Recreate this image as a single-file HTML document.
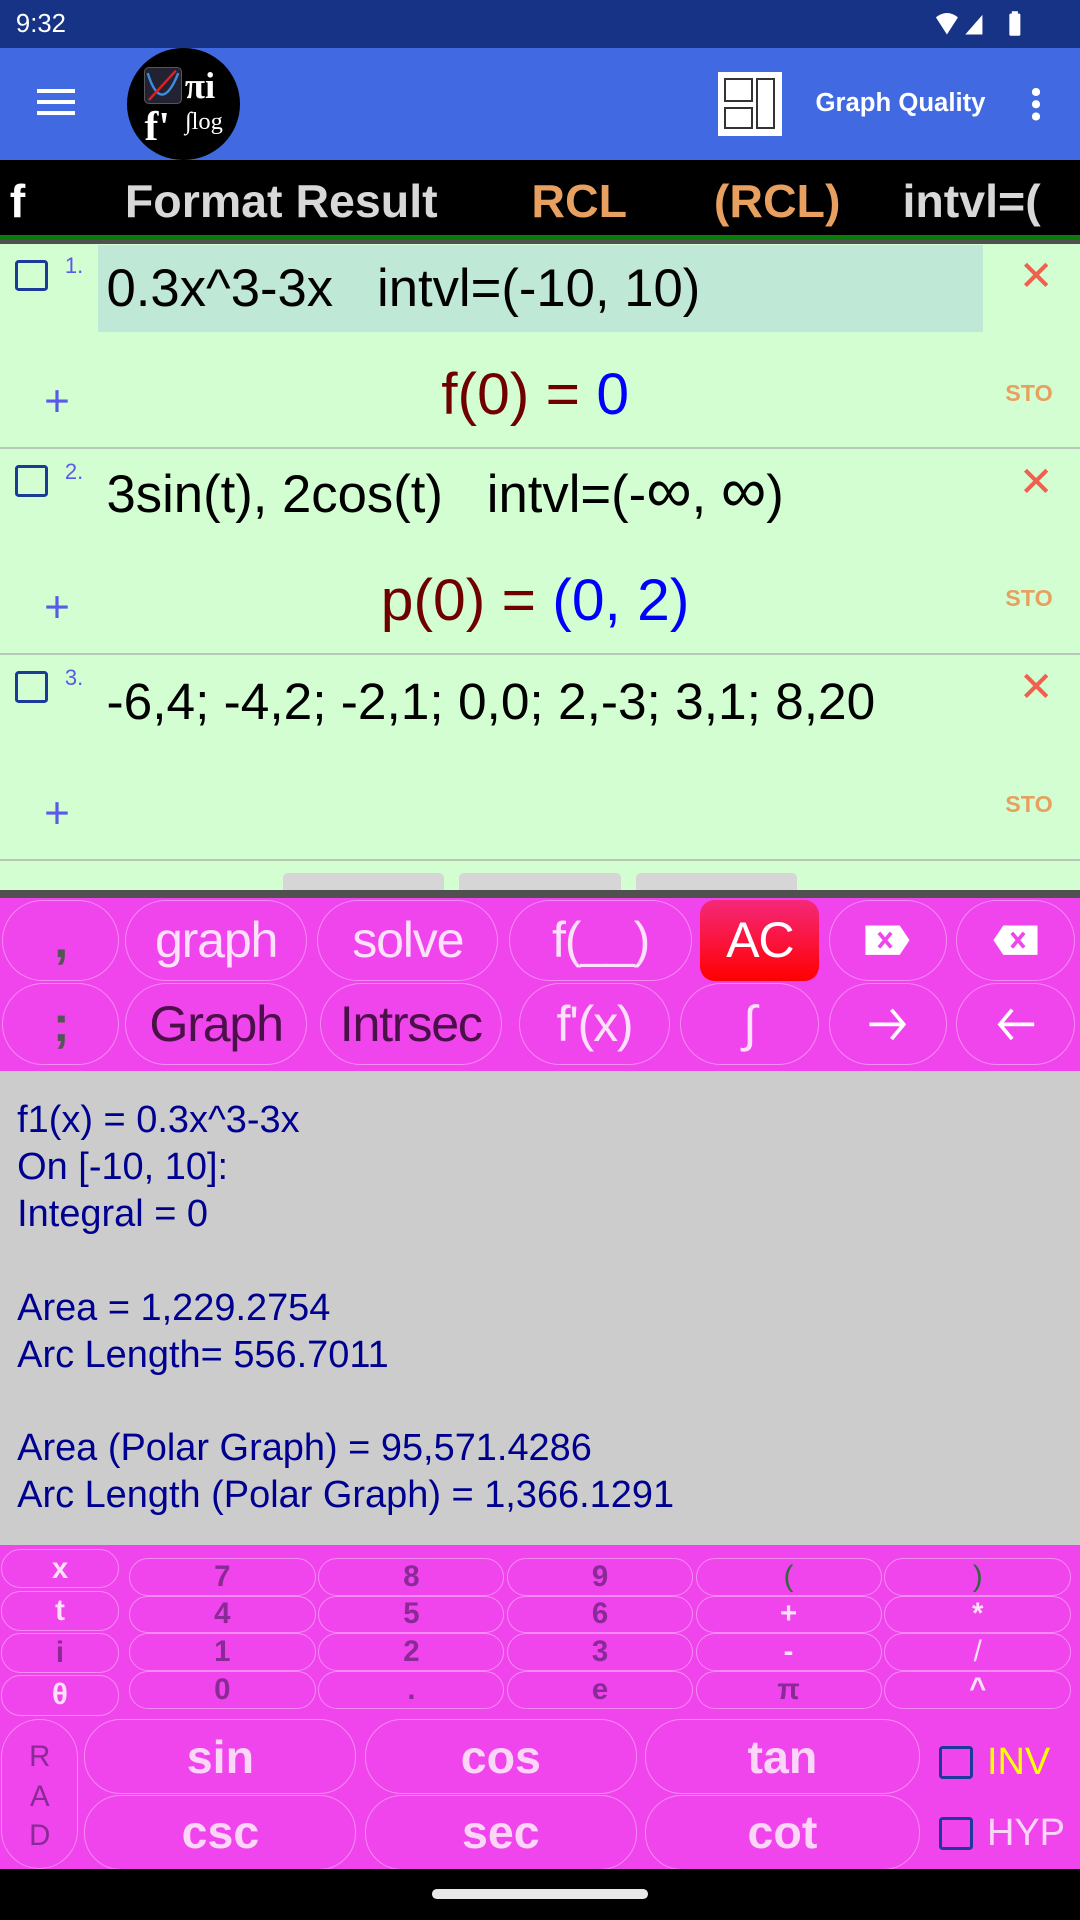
<!DOCTYPE html>
<html><head><meta charset="utf-8"><style>
*{margin:0;padding:0;box-sizing:border-box}
html,body{width:1080px;height:1920px;overflow:hidden;background:#000}
#r{position:absolute;left:0;top:0;width:882px;height:1568px;zoom:1.2244898;font-family:"Liberation Sans",sans-serif;background:#d2fed2;overflow:hidden}
.a{position:absolute}
.k{position:absolute;border:1.5px solid #f68af3;border-radius:34px;display:flex;align-items:center;justify-content:center;color:#fde0fb;font-size:41px;letter-spacing:-1px}
.n{position:absolute;border:1.5px solid #f68af3;border-radius:16px;display:flex;align-items:center;justify-content:center;color:#8a2a96;font-size:24px;font-weight:bold}
.s{position:absolute;border:1.5px solid #f68af3;border-radius:30px;display:flex;align-items:center;justify-content:center;color:#fbd6f8;font-size:38px;font-weight:bold}
.cb{position:absolute;width:27px;height:26px;border:3px solid #1c3a9a;border-radius:3px}
.row{position:absolute;left:0;width:882px;background:#d2fed2;border-bottom:2px solid #b8c8b8}
.x{position:absolute;left:832px;color:#f0604e;font-size:34px}
.sto{position:absolute;left:821px;color:#e8a060;font-size:19px;font-weight:bold}
.plus{position:absolute;left:36px;color:#5a5ae8;font-size:36px}
.num{position:absolute;left:53px;color:#5a5ae8;font-size:18px}
</style></head><body><div id="r">
<div class="a" style="left:0;top:0;width:882px;height:39px;background:#173385"></div>
<div class="a" style="left:13px;top:8px;color:#fff;font-size:21px">9:32</div>
<svg class="a" style="left:760px;top:8px" width="80" height="24" viewBox="0 0 80 24"><path d="M4 6 Q13 -1 22 6 L13 20 Z" fill="#fff"/><path d="M28 20 L42 4 L42 20Z" fill="#fff"/><rect x="64" y="3" width="9" height="18" rx="1" fill="#fff"/><rect x="66" y="1" width="5" height="3" fill="#fff"/></svg>
<div class="a" style="left:0;top:39px;width:882px;height:92px;background:#4169e1"></div>
<div class="a" style="left:30px;top:73px;width:31px;height:3px;background:#fff;box-shadow:0 9px 0 #fff,0 18px 0 #fff"></div>
<div class="a" style="left:104px;top:39px;width:92px;height:92px;border-radius:50%;background:#000"></div>
<div class="a" style="left:118px;top:55px;width:31px;height:30px;border:1px solid #555;border-radius:4px;background:#223"></div>
<svg class="a" style="left:118px;top:55px" width="31" height="30"><path d="M3 5 Q14 40 28 5" stroke="#3a8ee0" fill="none" stroke-width="2"/><path d="M4 27 L26 3" stroke="#e02020" stroke-width="2"/></svg>
<div class="a" style="left:151px;top:52px;color:#fff;font-family:'Liberation Serif',serif;font-size:30px;font-weight:bold">πi</div>
<div class="a" style="left:118px;top:84px;color:#fff;font-family:'Liberation Serif',serif;font-size:34px;font-weight:bold">f'</div>
<div class="a" style="left:151px;top:88px;color:#fff;font-family:'Liberation Serif',serif;font-size:20px">∫log</div>
<div class="a" style="left:586px;top:59px;width:53px;height:52px;background:#fff"></div>
<div class="a" style="left:591px;top:64px;width:24px;height:19px;border:2px solid #333"></div>
<div class="a" style="left:591px;top:87px;width:24px;height:18px;border:2px solid #333"></div>
<div class="a" style="left:617px;top:64px;width:16px;height:41px;border:2px solid #333"></div>
<div class="a" style="left:666px;top:73px;color:#fff;font-size:21px;font-weight:bold">Graph Quality</div>
<div class="a" style="left:843px;top:72px;width:6px;height:6px;border-radius:3px;background:#fff;box-shadow:0 10px 0 #fff,0 20px 0 #fff"></div>
<div class="a" style="left:0;top:131px;width:882px;height:61px;background:#000"></div>
<div class="a" style="left:0;top:192px;width:882px;height:4px;background:#0a7a0a"></div>
<div class="a" style="left:0;top:196px;width:882px;height:3px;background:#505050"></div>
<div class="a" style="left:8px;top:142px;font-size:38px;font-weight:bold;color:#fff">f</div>
<div class="a" style="left:102px;top:142px;font-size:38px;font-weight:bold;color:#d8d8d8">Format Result</div>
<div class="a" style="left:434px;top:142px;font-size:38px;font-weight:bold;color:#e8a060">RCL</div>
<div class="a" style="left:583px;top:142px;font-size:38px;font-weight:bold;color:#e8a060">(RCL)</div>
<div class="a" style="left:737px;top:142px;font-size:38px;font-weight:bold;color:#d8d8d8">intvl=(</div>

<div class="row" style="top:199px;height:168px"></div>
<div class="a" style="left:80px;top:200px;width:723px;height:71px;background:#c0e8d6"></div>
<div class="cb" style="left:12px;top:212px"></div><div class="num" style="top:207px">1.</div>
<div class="a" style="left:87px;top:211px;font-size:43px;color:#000;white-space:pre">0.3x^3-3x   intvl=(-10, 10)</div>
<div class="x" style="top:205px">✕</div>
<div class="a" style="left:0;width:874px;text-align:center;top:295px;font-size:48px;color:#700000">f(0) = <span style="color:#0000ff">0</span></div>
<div class="plus" style="top:308px">+</div><div class="sto" style="top:310px">STO</div>

<div class="row" style="top:367px;height:168px"></div>
<div class="cb" style="left:12px;top:380px"></div><div class="num" style="top:375px">2.</div>
<div class="a" style="left:87px;top:379px;font-size:43px;color:#000;white-space:pre">3sin(t), 2cos(t)   intvl=(-<span style="font-size:52px;line-height:40px">∞</span>, <span style="font-size:52px;line-height:40px">∞</span>)</div>
<div class="x" style="top:373px">✕</div>
<div class="a" style="left:0;width:874px;text-align:center;top:463px;font-size:48px;color:#700000">p(0) = <span style="color:#0000ff">(0, 2)</span></div>
<div class="plus" style="top:476px">+</div><div class="sto" style="top:478px">STO</div>

<div class="row" style="top:535px;height:168px"></div>
<div class="cb" style="left:12px;top:548px"></div><div class="num" style="top:543px">3.</div>
<div class="a" style="left:87px;top:548px;font-size:42px;color:#000;white-space:pre">-6,4; -4,2; -2,1; 0,0; 2,-3; 3,1; 8,20</div>
<div class="x" style="top:541px">✕</div>
<div class="plus" style="top:644px">+</div><div class="sto" style="top:646px">STO</div>

<div class="a" style="left:231px;top:713px;width:132px;height:20px;background:#d6d6d6;border-radius:4px"></div>
<div class="a" style="left:375px;top:713px;width:132px;height:20px;background:#d6d6d6;border-radius:4px"></div>
<div class="a" style="left:519px;top:713px;width:132px;height:20px;background:#d6d6d6;border-radius:4px"></div>
<div class="a" style="left:0;top:727px;width:882px;height:6px;background:#505050"></div>

<div class="a" style="left:0;top:733px;width:882px;height:142px;background:#f044ec"></div>
<div class="k" style="left:2px;top:735px;width:95px;height:66px;color:#555;font-weight:bold">,</div>
<div class="k" style="left:102px;top:735px;width:149px;height:66px">graph</div>
<div class="k" style="left:259px;top:735px;width:148px;height:66px">solve</div>
<div class="k" style="left:416px;top:735px;width:149px;height:66px">f(__)</div>
<div class="k" style="left:572px;top:735px;width:97px;height:66px;border:none;border-radius:12px;background:linear-gradient(#f5287a,#ff0000);color:#fff">AC</div>
<div class="k" style="left:677px;top:735px;width:96px;height:66px"><svg width="40" height="28"><path d="M2 2 H30 L38 14 L30 26 H2Z" fill="#fff"/><path d="M13 8 L23 20 M23 8 L13 20" stroke="#f044ec" stroke-width="3"/></svg></div>
<div class="k" style="left:781px;top:735px;width:97px;height:66px"><svg width="40" height="28"><path d="M38 2 H10 L2 14 L10 26 H38Z" fill="#fff"/><path d="M17 8 L27 20 M27 8 L17 20" stroke="#f044ec" stroke-width="3"/></svg></div>
<div class="k" style="left:2px;top:803px;width:95px;height:67px;color:#555;font-weight:bold">;</div>
<div class="k" style="left:102px;top:803px;width:149px;height:67px;color:#4a1048">Graph</div>
<div class="k" style="left:261px;top:803px;width:149px;height:67px;color:#4a1048">Intrsec</div>
<div class="k" style="left:424px;top:803px;width:123px;height:67px">f'(x)</div>
<div class="k" style="left:555px;top:803px;width:114px;height:67px">∫</div>
<div class="k" style="left:677px;top:803px;width:96px;height:67px"><svg width="34" height="30"><path d="M2 15 H30 M20 3 L30 15 L20 27" stroke="#fff" stroke-width="3" fill="none"/></svg></div>
<div class="k" style="left:781px;top:803px;width:97px;height:67px"><svg width="34" height="30"><path d="M32 15 H4 M14 3 L4 15 L14 27" stroke="#fff" stroke-width="3" fill="none"/></svg></div>

<div class="a" style="left:0;top:875px;width:882px;height:387px;background:#cccccc"></div>
<div class="a" style="left:14px;top:896px;font-size:31px;line-height:38.3px;color:#000090;white-space:pre">f1(x) = 0.3x^3-3x
On [-10, 10]:
Integral = 0

Area = 1,229.2754
Arc Length= 556.7011

Area (Polar Graph) = 95,571.4286
Arc Length (Polar Graph) = 1,366.1291</div>

<div class="a" style="left:0;top:1262px;width:882px;height:264px;background:#f044ec"></div>
<div class="n" style="left:1px;top:1265px;width:96px;height:32px;color:#fde0fb">x</div>
<div class="n" style="left:1px;top:1299px;width:96px;height:33px;color:#fde0fb">t</div>
<div class="n" style="left:1px;top:1334px;width:96px;height:32px">i</div>
<div class="n" style="left:1px;top:1368px;width:96px;height:33px;color:#fde0fb">θ</div>
<div class="n" style="left:105px;top:1272px;width:153px;height:31px">7</div>
<div class="n" style="left:260px;top:1272px;width:152px;height:31px">8</div>
<div class="n" style="left:414px;top:1272px;width:152px;height:31px">9</div>
<div class="n" style="left:568px;top:1272px;width:152px;height:31px;color:#2d6a3a;font-weight:normal">(</div>
<div class="n" style="left:722px;top:1272px;width:153px;height:31px;color:#2d6a3a;font-weight:normal">)</div>
<div class="n" style="left:105px;top:1303px;width:153px;height:31px">4</div>
<div class="n" style="left:260px;top:1303px;width:152px;height:31px">5</div>
<div class="n" style="left:414px;top:1303px;width:152px;height:31px">6</div>
<div class="n" style="left:568px;top:1303px;width:152px;height:31px;color:#fde0fb">+</div>
<div class="n" style="left:722px;top:1303px;width:153px;height:31px;color:#fde0fb">*</div>
<div class="n" style="left:105px;top:1334px;width:153px;height:31px">1</div>
<div class="n" style="left:260px;top:1334px;width:152px;height:31px">2</div>
<div class="n" style="left:414px;top:1334px;width:152px;height:31px">3</div>
<div class="n" style="left:568px;top:1334px;width:152px;height:31px;color:#fde0fb">-</div>
<div class="n" style="left:722px;top:1334px;width:153px;height:31px;color:#fde0fb;font-weight:normal">/</div>
<div class="n" style="left:105px;top:1365px;width:153px;height:31px">0</div>
<div class="n" style="left:260px;top:1365px;width:152px;height:31px">.</div>
<div class="n" style="left:414px;top:1365px;width:152px;height:31px">e</div>
<div class="n" style="left:568px;top:1365px;width:152px;height:31px">π</div>
<div class="n" style="left:722px;top:1365px;width:153px;height:31px;color:#fde0fb;align-items:flex-start">^</div>
<div class="a" style="left:1px;top:1404px;width:63px;height:122px;border:1.5px solid #f68af3;border-radius:32px;color:#8a2a96;font-size:24px;text-align:center;line-height:32px;padding-top:14px">R<br>A<br>D</div>
<div class="s" style="left:69px;top:1404px;width:222px;height:61px">sin</div>
<div class="s" style="left:298px;top:1404px;width:222px;height:61px">cos</div>
<div class="s" style="left:527px;top:1404px;width:224px;height:61px">tan</div>
<div class="s" style="left:69px;top:1466px;width:222px;height:61px">csc</div>
<div class="s" style="left:298px;top:1466px;width:222px;height:61px">sec</div>
<div class="s" style="left:527px;top:1466px;width:224px;height:61px">cot</div>
<div class="cb" style="left:767px;top:1426px;width:28px;height:27px"></div>
<div class="a" style="left:806px;top:1422px;font-size:31px;color:#ffff00">INV</div>
<div class="cb" style="left:767px;top:1484px;width:28px;height:27px"></div>
<div class="a" style="left:806px;top:1480px;font-size:31px;color:#fbd6f8">HYP</div>
<div class="a" style="left:0;top:1526px;width:882px;height:42px;background:#000"></div>
<div class="a" style="left:353px;top:1543px;width:176px;height:8px;border-radius:4px;background:#e8e8e8"></div>
</div></body></html>
